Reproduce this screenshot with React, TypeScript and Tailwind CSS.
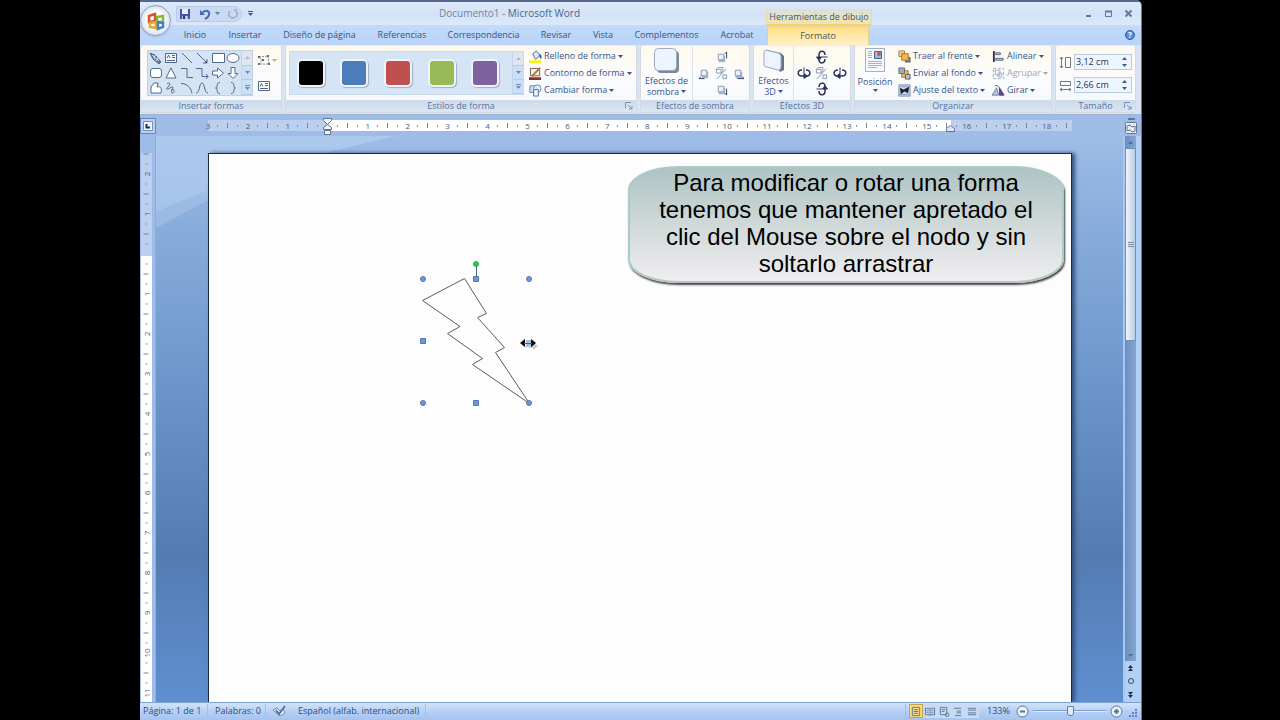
import type { ReactNode } from "react";
import { clsx } from "clsx";

const tabs = [
  "Inicio",
  "Insertar",
  "Diseño de página",
  "Referencias",
  "Correspondencia",
  "Revisar",
  "Vista",
  "Complementos",
  "Acrobat",
];

const swatches = [
  { name: "Negro", color: "bg-black" },
  { name: "Azul", color: "bg-[#4b7dbc]" },
  { name: "Rojo", color: "bg-[#c04f4f]" },
  { name: "Verde", color: "bg-[#98bb58]" },
  { name: "Morado", color: "bg-[#7e629f]" },
];

// one drawing per cell of the shape gallery, on a 14x14 grid
const shapes: { name: string; art: ReactNode }[] = [
  {
    name: "WordArt",
    art: (
      <>
        <path d="M1 2l5 2 6 7-2 2-6-5z" fill="#5d7891" />
        <path d="M3 4l7 6M6 4l-1 4M9 7l-2 3" stroke="#dce8f5" />
      </>
    ),
  },
  {
    name: "Cuadro de texto",
    art: (
      <>
        <path d="M1.500 2.500h11v9h-11z" fill="#f4f8fd" />
        <path d="M3 7l1.500-3L6 7M8 4.500h3M8 6.500h3M3 9.500h8" />
      </>
    ),
  },
  { name: "Línea", art: <path d="M2 2l10 10" /> },
  { name: "Flecha", art: <path d="M2 2l10 10M12 8v4H8M10 12l2-2" /> },
  { name: "Rectángulo", art: <path d="M1.500 2.500h12v9h-12z" fill="#fff" /> },
  { name: "Elipse", art: <ellipse cx="7" cy="7" rx="6" ry="4.500" fill="#fff" /> },
  { name: "Rectángulo redondeado", art: <rect x="1.500" y="2.500" width="11" height="9" rx="2.500" fill="#fff" /> },
  { name: "Triángulo", art: <path d="M7 2l5 10H2z" fill="#fff" /> },
  { name: "Conector angular", art: <path d="M1 2.500h6v9h6" /> },
  { name: "Flecha angular", art: <path d="M1 2.500h6v8h6M11 8l2 2.500-2 2.500" /> },
  { name: "Flecha derecha", art: <path d="M1.500 5h5V2l6 5-6 5V9h-5z" fill="#fff" /> },
  { name: "Flecha abajo", art: <path d="M5 1.500v6H2l5 5 5-5H9v-6z" fill="#fff" /> },
  { name: "Forma libre", art: <path d="M2 12V6l3-4h4L8 6c4-1 5 1 4 6z" fill="#fff" /> },
  { name: "A mano alzada", art: <path d="M3 3c3-3 4 1 1 3s-1 3 2 1 4-1 2 2 1 4 2 2-1-3-3-2" /> },
  { name: "Arco", art: <path d="M1 2.500c6 0 10 4 11 10" /> },
  { name: "Curva", art: <path d="M1 12c4 0 3-10 6-10s2 10 6 10" /> },
  { name: "Abrir llave", art: <path d="M9 1.500C4 1.500 8 7 4.500 7 8 7 4 12.500 9 12.500" /> },
  { name: "Cerrar llave", art: <path d="M5 1.500C10 1.500 6 7 9.500 7 6 7 10 12.500 5 12.500" /> },
];

// ruler marks, four per centimetre
const rulerMark = (i: number, zero: number) => {
  const n = i - zero;
  if (n === 0) return "";
  if (n % 4 === 0) return String(Math.abs(n / 4));
  return n % 2 === 0 ? "|" : "·";
};

function Mark({ value }: { value: string }) {
  if (value === "|") return <i className="h-[5px] w-px bg-[#7a8391]" />;
  if (value === "·") return <i className="h-[2px] w-px bg-[#8a929e]" />;
  return <span>{value}</span>;
}

function Caret({ className = "" }: { className?: string }) {
  return (
    <svg viewBox="0 0 5 3" className={clsx("h-[3px] w-[5px] shrink-0", className)} fill="currentColor">
      <path d="M0 0h5L2.500 3z" />
    </svg>
  );
}

function Launcher() {
  return (
    <button aria-label="Más opciones" className="absolute right-[3px] top-[2px]">
      <svg viewBox="0 0 8 8" className="size-2" fill="none" stroke="#7992b8">
        <path d="M.5 6V.5H6M3 3l4 4M7 4v3H4" />
      </svg>
    </button>
  );
}

function Group({ label, launcher, children }: { label: string; launcher?: boolean; children: ReactNode }) {
  return (
    <section className="flex min-w-0 flex-col overflow-hidden rounded-[3px] border border-[#d5dae2] border-t-[#f6ead0] bg-linear-to-b from-[#fff9ed] via-[#fbfcfe] to-[#f3f7fc]">
      <div className="flex min-h-0 flex-1">{children}</div>
      <h2 className="relative h-3 bg-linear-to-b from-[#cddaea] to-[#dce6f2] text-center leading-3 text-[#5473a5]">
        {label}
        {launcher && <Launcher />}
      </h2>
    </section>
  );
}

function GalleryScroll() {
  return (
    <div className="flex w-[11px] shrink-0 flex-col border-l border-[#c2d3ea] text-[#6b89b5]">
      {["Subir", "Bajar", "Más"].map((name, i) => (
        <button
          key={name}
          aria-label={name}
          className={clsx(
            "flex flex-1 flex-col items-center justify-center gap-px border-b border-[#b5cae6]",
            i === 0 ? "bg-[#dfe6ee] text-[#abb9ca]" : "bg-[#cbdff6]"
          )}
        >
          {i === 2 && <span className="h-px w-[5px] bg-current" />}
          <Caret className={i === 0 ? "rotate-180" : ""} />
        </button>
      ))}
    </div>
  );
}

function Command({ icon, label, disabled }: { icon: ReactNode; label: string; disabled?: boolean }) {
  return (
    <button
      disabled={disabled}
      className={clsx("flex h-[17px] items-center gap-[2px] whitespace-nowrap", disabled ? "text-[#a3a7b0]" : "text-[#36548b]")}
    >
      <svg viewBox="0 0 14 14" className="size-[13px] shrink-0" fill="none">
        {icon}
      </svg>
      {label}
      <Caret />
    </button>
  );
}

function SizeField({ id, label, value, icon }: { id: string; label: string; value: string; icon: ReactNode }) {
  return (
    <div className="flex items-center gap-[2px]">
      <label htmlFor={id} aria-label={label}>
        <svg viewBox="0 0 13 13" className="size-[13px]" fill="none" stroke="#6b7a91">
          {icon}
        </svg>
      </label>
      <div className="flex h-4 min-w-0 flex-1 items-center border border-[#b7cbe5] bg-[#eef5fd]">
        <input id={id} defaultValue={value} className="w-full min-w-0 bg-transparent pl-px text-[#26355a] outline-none" />
        <div className="flex flex-col gap-[4px] px-1 text-[#3c5a8e]">
          <button aria-label={"Aumentar " + label}>
            <Caret className="block rotate-180" />
          </button>
          <button aria-label={"Reducir " + label}>
            <Caret className="block" />
          </button>
        </div>
      </div>
    </div>
  );
}

function TitleBar() {
  return (
    <header className="flex h-[25px] items-center border-t-2 border-[#54688f] bg-linear-to-b from-[#dfeafa] via-[#d3e3f7] to-[#dce9fa] pl-9">
      <div className="flex h-4 w-[66px] items-center gap-2 rounded-r-full border border-[#bccde6] bg-[#c9dbf3] pl-[2px]">
        <button aria-label="Guardar">
          <svg viewBox="0 0 12 12" className="size-3">
            <path d="M1 1h10v10H1z" fill="#4552ae" />
            <path d="M3 1h6v5H3z" fill="#e9effc" />
            <path d="M3 8h6v3H3z" fill="#b9c4e3" />
            <path d="M4 8h2v3H4z" fill="#273575" />
          </svg>
        </button>
        <button aria-label="Deshacer" className="flex items-center gap-1 text-[#637ba4]">
          <svg viewBox="0 0 12 12" className="size-3" fill="none" stroke="#4768b8" strokeWidth="2">
            <path d="M3 5c4-4 8-2 7 2-.5 2-2 3-4 4" />
            <path d="M1 2v5h5z" fill="#4768b8" stroke="none" />
          </svg>
          <Caret />
        </button>
        <button aria-label="Rehacer" className="-ml-px">
          <svg viewBox="0 0 12 12" className="size-3" fill="none" stroke="#a5b5ca" strokeWidth="2">
            <path d="M3 3c-3 4 0 7 3 7s6-4 3-7" />
            <path d="M6 1h4v4z" fill="#a5b5ca" stroke="none" />
          </svg>
        </button>
      </div>
      <button aria-label="Personalizar" className="ml-[6px] flex flex-col items-center gap-px text-[#42557a]">
        <span className="h-px w-[5px] bg-current" />
        <Caret />
      </button>
      <h1 className="flex-1 text-center text-[10px] text-[#49658f]">
        <span className="text-[#75849c]">Documento1 - </span>Microsoft Word
      </h1>
      <div className="flex h-4 w-[106px] items-center justify-center self-end border-x border-b border-[#e6d9ae] border-b-[#f2ce6c] bg-linear-to-b from-[#d9e1df] to-[#f1e4ae] whitespace-nowrap text-[#3b5377]">
        Herramientas de dibujo
      </div>
      <div className="flex w-[269px] items-center justify-end gap-[11px] pr-2 text-[#66799b]">
        <button aria-label="Minimizar">
          <svg viewBox="0 0 9 9" className="size-[9px]" fill="currentColor">
            <path d="M2 6h5v2H2z" />
          </svg>
        </button>
        <button aria-label="Maximizar">
          <svg viewBox="0 0 9 9" className="size-[9px]" fill="none" stroke="currentColor">
            <path d="M1.500 2.500h6v5h-6z" />
            <path d="M1 2.500h7" strokeWidth="2" />
          </svg>
        </button>
        <button aria-label="Cerrar">
          <svg viewBox="0 0 9 9" className="size-[9px]" fill="none" stroke="currentColor" strokeWidth="2">
            <path d="M1.500 1.500l6 6M7.500 1.500l-6 6" />
          </svg>
        </button>
      </div>
    </header>
  );
}

function OfficeButton() {
  return (
    <button
      aria-label="Botón de Office"
      className="absolute left-0 top-[5px] z-10 flex size-[31px] items-center justify-center rounded-full border border-[#8c9fbd] bg-radial from-white from-40% to-[#b9c9df] shadow-sm"
    >
      <svg viewBox="0 0 20 20" className="size-5" fill="none" strokeWidth="2.500">
        <path d="M3 5l6-2v7l-6 1z" stroke="#d8512b" />
        <path d="M11 6l6-1v6h-6z" stroke="#82b83d" />
        <path d="M4 12l6-1v6l-6-1z" stroke="#e8a729" />
        <path d="M12 11l5 1v4l-5 2z" stroke="#3c82c8" />
      </svg>
    </button>
  );
}

function TabBar() {
  return (
    <nav className="flex h-5 items-end bg-linear-to-b from-[#c3daf8] to-[#b8d4fa] pl-8 text-[#355488]">
      <div className="grid h-full grid-cols-[46px_54px_95px_70px_93px_52px_42px_85px_56px]">
        {tabs.map((tab) => (
          <a key={tab} href="#" className="flex items-center justify-center whitespace-nowrap">
            {tab}
          </a>
        ))}
      </div>
      <a
        href="#"
        className="ml-[2px] flex h-[19px] w-[102px] items-center justify-center rounded-t-[3px] border-x border-t border-[#e8cf91] bg-linear-to-b from-[#ffdf83] to-[#fff0c8] text-[#4c5266]"
      >
        Formato
      </a>
      <button
        aria-label="Ayuda"
        className="mb-[5px] ml-auto mr-[6px] flex size-[10px] items-center justify-center rounded-full border border-[#2c58aa] bg-[#5d8bd7] text-[8px] leading-none font-bold text-white"
      >
        ?
      </button>
    </nav>
  );
}

function ShadowNudge({ name, arrow, place }: { name: string; arrow: string; place: string }) {
  return (
    <button aria-label={name} className={place}>
      <svg viewBox="0 0 14 14" className="size-[13px]" fill="none" stroke="#8598ad">
        <path d="M4 5h7v7H4z" fill="#a9b7c6" stroke="none" />
        <path d="M3.500 3.500h6v6h-6z" fill="#e9f1fa" />
        <path d={arrow} stroke="#26375c" />
      </svg>
    </button>
  );
}

function Tilt({ name, turn, place }: { name: string; turn: string; place: string }) {
  return (
    <button aria-label={name} className={place}>
      <svg viewBox="0 0 14 14" className={clsx("size-[14px]", turn)} fill="none" stroke="#29325c" strokeWidth="1.500">
        <path d="M5 4C0 4 0 10 5 10h2M9 4c5 0 5 6 1 6" />
        <path d="M7 1.500v11" strokeWidth="1" />
        <path d="M7 7v6l4-3z" fill="#29325c" stroke="none" />
      </svg>
    </button>
  );
}

function OnOff({ name }: { name: string }) {
  return (
    <button aria-label={name} className="col-start-2 row-start-2">
      <svg viewBox="0 0 14 14" className="size-[13px]" fill="none" stroke="#8296b0">
        <path d="M1.500 2.500h5v4h-5zM1.500 2.500l2-2h5v4l-2 2M12 2L2 13M8.500 8.500h4v4h-4z" />
      </svg>
    </button>
  );
}

function Ribbon() {
  return (
    <div className="grid h-[70px] grid-cols-[142fr_352fr_110fr_98fr_198fr_81fr] gap-[3px] border-b border-[#9db5d5] bg-[#d8e4f2] pb-px pr-[5px] text-[#36548b]">
      <Group label="Insertar formas">
        <div className="my-1 ml-[6px] flex w-[106px] shrink-0 border border-[#bfd1e8] bg-[#d5e4f5]">
          <div className="grid flex-1 grid-cols-6 grid-rows-3 place-items-center">
            {shapes.map((s) => (
              <button key={s.name} aria-label={s.name}>
                <svg viewBox="0 0 14 14" className="block size-[14px]" fill="none" stroke="#53688a">
                  {s.art}
                </svg>
              </button>
            ))}
          </div>
          <GalleryScroll />
        </div>
        <div className="flex flex-1 flex-col items-start justify-between py-2 pl-1">
          <button aria-label="Modificar forma" className="flex items-center gap-px text-[#a8aeb8]">
            <svg viewBox="0 0 14 12" className="h-3 w-[14px]" fill="#5f6977" stroke="#8790a0">
              <path d="M2 3l9-1 1 8H2l3-4z" fill="none" strokeDasharray="2 1" />
              <path d="M1 2h2v2H1zM10 1h2v2h-2zM11 9h2v2h-2zM1 9h2v2H1zM5 5h2v2H5z" stroke="none" />
            </svg>
            <Caret />
          </button>
          <button aria-label="Dibujar cuadro de texto">
            <svg viewBox="0 0 14 12" className="block h-3 w-[14px]" fill="none" stroke="#4f678d">
              <path d="M1.500 1.500h11v9h-11z" fill="#fff" />
              <path d="M3 6.500l1.500-3L6 6.500M8 3.500h3M8 5.500h3M3 8.500h8" />
            </svg>
          </button>
        </div>
      </Group>

      <Group label="Estilos de forma" launcher>
        <div className="my-[5px] ml-[3px] flex flex-1 border border-[#c9daee] bg-[#d5e5f6]">
          <div className="grid flex-1 grid-cols-5 place-items-center pr-1">
            {swatches.map((s) => (
              <button
                key={s.name}
                aria-label={s.name}
                className={clsx("size-7 -translate-x-px rounded-[5px] border-2 border-[#eef4fa] shadow-[1px_1px_1px_#a0aec2]", s.color)}
              />
            ))}
          </div>
          <GalleryScroll />
        </div>
        <div className="flex w-[112px] shrink-0 flex-col justify-center pl-[5px]">
          <Command
            label="Relleno de forma"
            icon={
              <>
                <path d="M4 4l4-3 4 5-5 4z" fill="#dce8f5" stroke="#50698f" />
                <path d="M11 5c2 1 2 3 1 4" stroke="#3668b2" strokeWidth="2" />
                <path d="M0 11h13v3H0z" fill="#f7f219" />
              </>
            }
          />
          <Command
            label="Contorno de forma"
            icon={
              <>
                <path d="M1.500 1.500h10v8h-10z" fill="#eee" stroke="#6c5e58" />
                <path d="M12 1L5 8l-2 2" stroke="#ac762b" strokeWidth="2" />
                <path d="M0 11h13v3H0z" fill="#8d2f31" />
              </>
            }
          />
          <Command
            label="Cambiar forma"
            icon={
              <>
                <path d="M1 2h7v7H1z" fill="#cddff5" stroke="#6281af" />
                <circle cx="9" cy="5" r="4" fill="#e2edf9" stroke="#6281af" />
                <path d="M5 6h5v7H5z" fill="#edf4fc" stroke="#3c6ca8" />
              </>
            }
          />
        </div>
      </Group>

      <Group label="Efectos de sombra">
        <button className="flex w-[52px] shrink-0 flex-col items-center border-r border-[#dbe2ec] pt-px leading-[11px]">
          <svg viewBox="0 0 28 28" className="size-7 shrink-0">
            <rect x="4" y="4" width="22" height="22" rx="4" fill="#7f8893" />
            <rect x="1.500" y="1.500" width="22" height="22" rx="4" fill="#edf4fd" stroke="#9aabc3" />
          </svg>
          <span>Efectos de</span>
          <span className="flex items-center gap-[2px]">
            sombra <Caret />
          </span>
        </button>
        <div className="m-auto grid grid-cols-3 gap-x-1 gap-y-[3px]">
          <ShadowNudge name="Sombra hacia arriba" place="col-start-2 row-start-1" arrow="M12.500 8V1M10.500 3l2-2" />
          <ShadowNudge name="Sombra a la izquierda" place="col-start-1 row-start-2" arrow="M7 12.500H1M3 10.500l-2 2" />
          <OnOff name="Activar o desactivar sombra" />
          <ShadowNudge name="Sombra a la derecha" place="col-start-3 row-start-2" arrow="M6 12.500h7M11 10.500l2 2" />
          <ShadowNudge name="Sombra hacia abajo" place="col-start-2 row-start-3" arrow="M12.500 6v7M10.500 11l2 2" />
        </div>
      </Group>

      <Group label="Efectos 3D">
        <button className="flex w-10 shrink-0 flex-col items-center border-r border-[#dbe2ec] pt-px leading-[11px]">
          <svg viewBox="0 0 28 28" className="size-7 shrink-0">
            <path d="M7 3l14 3 3 3v14l-4 2z" fill="#657383" />
            <path d="M6 3q-2 0-2 3v12q0 2 3 2l11 3q3 0 3-3V9q0-2-3-3z" fill="#edf4fd" stroke="#9aabc3" />
          </svg>
          <span>Efectos</span>
          <span className="flex items-center gap-[2px]">
            3D <Caret />
          </span>
        </button>
        <div className="m-auto grid grid-cols-3 gap-x-1 gap-y-[2px]">
          <Tilt name="Inclinar hacia arriba" place="col-start-2 row-start-1" turn="rotate-90" />
          <Tilt name="Inclinar a la izquierda" place="col-start-1 row-start-2" turn="rotate-0" />
          <OnOff name="Activar o desactivar 3D" />
          <Tilt name="Inclinar a la derecha" place="col-start-3 row-start-2" turn="-scale-x-100" />
          <Tilt name="Inclinar hacia abajo" place="col-start-2 row-start-3" turn="-rotate-90" />
        </div>
      </Group>

      <Group label="Organizar">
        <button className="flex w-10 shrink-0 flex-col items-center pt-[2px]">
          <svg viewBox="0 0 20 24" className="h-6 w-5 shrink-0" fill="none" stroke="#a3b1c7">
            <path d="M.5.5h19v23H.5z" fill="#f5f9fe" />
            <path d="M3 3.500h4M3 5.500h4M3 7.500h4M3 9.500h4M3 13.500h14M3 15.500h14M3 17.500h14M3 19.500h9" />
            <path d="M9.500 3.500h7v7h-7z" fill="#9db9de" stroke="#44618f" />
            <circle cx="14" cy="6" r="2" fill="#d4543d" stroke="none" />
          </svg>
          <span className="mt-[3px]">Posición</span>
          <Caret />
        </button>
        <div className="ml-[3px] flex w-[94px] shrink-0 flex-col justify-center">
          <Command
            label="Traer al frente"
            icon={
              <>
                <path d="M1 1h6v6H1z" fill="#f0d28c" stroke="#9f834c" />
                <path d="M8 8h5v5H8z" fill="#8993a2" stroke="#4b5263" />
                <path d="M4 4h7v7H4z" fill="#f0b845" stroke="#a9712b" />
              </>
            }
          />
          <Command
            label="Enviar al fondo"
            icon={
              <>
                <path d="M4 4h7v7H4z" fill="#eebe56" stroke="#a9712b" />
                <path d="M1 1h6v6H1z" fill="#a3acba" stroke="#5d6678" />
                <path d="M8 8h5v5H8z" fill="#bbc4d0" stroke="#4b5263" />
              </>
            }
          />
          <Command
            label="Ajuste del texto"
            icon={
              <>
                <path d="M1 1h12v12H1z" fill="#d8e5f7" stroke="#7083a1" />
                <path d="M2 3h10M2 11h10" stroke="#7790b8" />
                <path d="M2 4l4 2 6-3-1 7-4-2-4 3z" fill="#20242c" />
              </>
            }
          />
        </div>
        <div className="flex flex-col justify-center">
          <Command
            label="Alinear"
            icon={
              <>
                <path d="M2 1v12" stroke="#303440" strokeWidth="2" />
                <path d="M4 3h5v2H4zM4 9h8v2H4z" fill="#c8d1df" stroke="#53617a" />
              </>
            }
          />
          <Command
            disabled
            label="Agrupar"
            icon={
              <>
                <path d="M1.500 1.500h11v11h-11z" stroke="#99a4b5" strokeDasharray="3 2" />
                <path d="M3.500 3.500h5v5h-5zM6.500 6.500h4v4h-4z" stroke="#9caabf" />
              </>
            }
          />
          <Command
            label="Girar"
            icon={
              <>
                <path d="M0 12h7L5 4z" fill="#b7c5dc" stroke="#7482a0" />
                <path d="M8 4l5 8H8z" fill="#69458e" stroke="#503679" />
                <path d="M3 2c2-1 4 0 5 2" stroke="#42618f" />
              </>
            }
          />
        </div>
      </Group>

      <Group label="Tamaño" launcher>
        <div className="flex min-w-0 flex-1 flex-col gap-[7px] px-[3px] pt-2">
          <SizeField
            id="alto"
            label="Alto de forma"
            value="3,12 cm"
            icon={<path d="M2.500 1v11M1 3l1.500-2L4 3M1 10l1.500 2L4 10M6.500 1.500h5v10h-5z" />}
          />
          <SizeField
            id="ancho"
            label="Ancho de forma"
            value="2,66 cm"
            icon={<path d="M1.500 2.500h10v4h-10zM1 10.500h11M3 9l-2 1.500L3 12M10 9l2 1.500-2 1.500" />}
          />
        </div>
      </Group>
    </div>
  );
}

function HorizontalRuler() {
  return (
    <div className="flex h-[21px] items-center bg-[#9fbce8] pr-1 text-[8px] leading-none text-[#4c5a70]">
      <button aria-label="Tabulación izquierda" className="flex size-4 items-center justify-center border border-[#6586bd] bg-[#b9d0f0]">
        <svg viewBox="0 0 10 10" className="size-[10px]" fill="#eef5fd" stroke="#7491bf">
          <path d="M.5.5h9v9h-9z" />
          <path d="M3.500 3v3.500H7" stroke="#1c2c4c" strokeWidth="2" />
        </svg>
      </button>
      <div className="relative ml-[52px] mr-[53px] min-w-0 flex-1">
        <div className="flex h-[11px] items-center bg-[linear-gradient(90deg,#bbd0ee_120px,#fff_120px,#fff_calc(100%-121px),#bbd0ee_calc(100%-121px))]">
          <div className="-ml-[5px] flex flex-1">
            {Array.from({ length: 87 }, (_, i) => (
              <div key={i} className="flex w-0 flex-1 items-center justify-center">
                <Mark value={rulerMark(i, 12)} />
              </div>
            ))}
          </div>
        </div>
        {/* indent handles sit over the ruler */}
        <svg viewBox="0 0 9 17" className="absolute -top-[2px] left-[115px] h-[17px] w-[9px]" fill="#eef5fd" stroke="#61758f">
          <path d="M.5.5h8v2l-4 4-4-4zM.5 11.500v-2l4-3 4 3v2zM1.500 12.500h6v4h-6z" />
        </svg>
        <svg viewBox="0 0 9 7" className="absolute right-[117px] top-[5px] h-[7px] w-[9px]" fill="#dfe9f6" stroke="#61758f">
          <path d="M.5 6.500v-3l4-3 4 3v3z" />
        </svg>
      </div>
      <button aria-label="Regla" className="flex flex-col items-center gap-[2px]">
        <span className="h-[2px] w-[7px] bg-[#5c77a5]" />
        <svg viewBox="0 0 12 12" className="size-3" fill="#e6edf7" stroke="#68748a">
          <rect x=".5" y=".5" width="11" height="11" rx="1" />
          <path d="M2 4l3-1 2 2 3-1v5l-3 1-2-2-3 1z" />
        </svg>
      </button>
    </div>
  );
}

function VerticalRuler() {
  return (
    <div className="flex w-4 shrink-0 flex-col border-r border-[#8eacd9] bg-[#9fbce8] pl-px pr-[3px] pt-[17px] text-[8px] leading-none text-[#4c5a70]">
      <div className="flex min-h-0 flex-1 flex-col bg-[linear-gradient(#bbd0ee_103px,#fff_103px)] pb-1">
        <div className="-mt-1 flex min-h-0 flex-1 flex-col">
          {Array.from({ length: 55 }, (_, i) => (
            <div key={i} className="flex h-0 flex-1 -rotate-90 items-center justify-center">
              <Mark value={rulerMark(i, 10)} />
            </div>
          ))}
        </div>
      </div>
    </div>
  );
}

// lightning bolt with its eight handles, rotation handle and resize pointer
function SelectedShape() {
  return (
    <svg viewBox="0 0 130 152" className="absolute left-[208px] top-[102px] h-[152px] w-[130px]" fill="none">
      <path
        d="M47.500 22.500L5.500 44.500 43 70.500 30.500 77.500 65.500 102.500 55.500 108.500 112.500 147.500 78.500 96.500 87.500 91.500 60.500 61.500 69.500 57.500z"
        stroke="#5c5c5c"
      />
      <path d="M59.500 8v14" stroke="#48658f" />
      <circle cx="59" cy="8" r="2.500" fill="#19d251" stroke="#22b04e" />
      <g fill="#6d96d3" stroke="#5578b0">
        <circle cx="6" cy="23" r="2.500" />
        <circle cx="112" cy="23" r="2.500" />
        <circle cx="6" cy="147" r="2.500" />
        <circle cx="112" cy="147" r="2.500" />
        <path d="M56.500 20.500h5v5h-5zM3.500 82.500h5v5h-5zM56.500 144.500h5v5h-5z" />
      </g>
      <path d="M107 91l4-2h6v-2l4 3-5 4v-2z" fill="#ccc" />
      <path d="M109 84h6v6h-6z" fill="#a3bfe6" />
      <path d="M103 87l5-4v8zM119 87l-5-4v8z" fill="#000" />
      <path d="M107 87.500h8" stroke="#4e5f7a" />
    </svg>
  );
}

function DocumentArea() {
  return (
    <div className="relative flex min-w-0 flex-1 overflow-hidden bg-[linear-gradient(#9ebce7,#86abda_18%,#6b95ca_45%,#547cb1_74%,#5f8fd1)] pl-[52px] pr-[51px] pt-[17px]">
      <svg viewBox="0 0 240 100" className="absolute left-0 top-0 h-[100px] w-60">
        <path d="M0 0h240C160 18 80 40 0 76z" fill="#b7d1f1" opacity=".6" />
        <path d="M0 76L52 54v10L0 92z" fill="#b7d1f1" opacity=".35" />
      </svg>
      <main className="relative flex-1 border border-b-0 border-[#1d2c42] bg-[#fdfdfe] shadow-[3px_0_4px_#34527f]">
        <SelectedShape />
        <p className="absolute right-[7px] top-3 w-[436px] rounded-[50px/24px] border-2 border-[#abcbc8] border-b-[#b5c4c4] bg-linear-to-b from-[#afc3c3] via-[#d0d9d9] to-[#efedf0] px-4 pb-1 pt-px text-center font-['Liberation_Sans',Arial,sans-serif] text-2xl leading-[27px] text-black shadow-[1px_2px_2px_#444]">
          Para modificar o rotar una forma
          <br />
          tenemos que mantener apretado el
          <br />
          clic del Mouse sobre el nodo y sin
          <br />
          soltarlo arrastrar
        </p>
      </main>
    </div>
  );
}

function ScrollBar() {
  return (
    <div className="flex w-[18px] shrink-0 flex-col items-center border-l-2 border-[#a9c7f1] bg-[#b2cff4] pr-[5px] text-[#4e6c9f]">
      <div className="flex w-full flex-1 flex-col items-center bg-linear-to-r from-[#6c8fbf] to-[#86a5d0]">
        <button aria-label="Desplazar arriba" className="flex h-3 items-center">
          <Caret className="rotate-180" />
        </button>
        <div className="flex h-[193px] w-full flex-col items-center justify-center gap-px border border-[#7690b5] bg-linear-to-r from-[#f0f5fb] to-[#b9cde3]">
          <span className="h-px w-[6px] bg-[#7c91ad]" />
          <span className="h-px w-[6px] bg-[#7c91ad]" />
          <span className="h-px w-[6px] bg-[#7c91ad]" />
        </div>
        <button aria-label="Desplazar abajo" className="mt-auto flex h-3 items-center">
          <Caret />
        </button>
      </div>
      <div className="flex h-[41px] flex-col items-center justify-around text-[#1b2c4f]">
        <button aria-label="Página anterior">
          <Caret className="block rotate-180" />
          <Caret className="block rotate-180" />
        </button>
        <button aria-label="Seleccionar objeto" className="size-[6px] rounded-full border border-[#35486e] bg-[#bed0e8]" />
        <button aria-label="Página siguiente">
          <Caret className="block" />
          <Caret className="block" />
        </button>
      </div>
    </div>
  );
}

const views = [
  { name: "Diseño de impresión", d: "M2.500 1.500h8v9h-8zM4 4h5M4 6h5M4 8h5" },
  { name: "Lectura", d: "M1.500 2.500h4l1 1 1-1h4v7h-4l-1 1-1-1h-4zM6.500 3v7M3 5h2M8 5h2M3 7h2M8 7h2" },
  { name: "Diseño web", d: "M2.500 1.500h7v8h-7zM4 4h4M4 6h3M8 9.500a2 2 0 1 0 4 0 2 2 0 1 0-4 0" },
  { name: "Esquema", d: "M2 2.500h8M5 5.500h5M5 7.500h5M3 10.500h7" },
  { name: "Borrador", d: "M2 2.500h9M2 4.500h9M2 7.500h9M2 9.500h9" },
];

function StatusBar() {
  return (
    <footer className="flex h-[18px] items-center border-t border-[#7da2d8] bg-linear-to-b from-[#d2e3fa] via-[#b5d0f5] to-[#a4c3ef] pb-px text-[#2e4c80]">
      <span className="w-[68px] border-r border-[#a5bfe5] pl-[3px] whitespace-nowrap">Página: 1 de 1</span>
      <span className="w-[58px] border-r border-[#a5bfe5] pl-[7px] whitespace-nowrap">Palabras: 0</span>
      <button aria-label="Revisión" className="mx-[6px]">
        <svg viewBox="0 0 14 12" className="h-3 w-[14px]" fill="#f2f6fc" stroke="#7286a7">
          <path d="M1 5l4-2 3 3 3-2 2 4-5 3z" />
          <path d="M4 5l3 4 6-8" fill="none" stroke="#5474a6" strokeWidth="2" />
        </svg>
      </button>
      <span className="ml-[6px] border-r border-[#a5bfe5] pr-[6px]">Español (alfab. internacional)</span>
      <div className="ml-auto flex border-l border-[#9dbae3] pl-[3px]">
        {views.map((v, i) => (
          <button
            key={v.name}
            aria-label={v.name}
            className={clsx("flex h-[14px] w-[14px] items-center justify-center", i === 0 ? "border border-[#c7a14c] bg-[#fbdc85]" : "bg-[#c8dbf2]")}
          >
            <svg viewBox="0 0 13 12" className="h-[11px] w-3" fill="none" stroke="#5a7396">
              <path d={v.d} />
            </svg>
          </button>
        ))}
      </div>
      <span className="ml-2 w-[29px]">133%</span>
      <button aria-label="Alejar">
        <svg viewBox="0 0 13 13" className="size-[13px]" fill="#e9f2fd" stroke="#5e7294">
          <circle cx="6.500" cy="6.500" r="5.500" />
          <path d="M4 6.500h5" strokeWidth="2" />
        </svg>
      </button>
      <input
        type="range"
        aria-label="Zoom"
        min={0}
        max={100}
        defaultValue={52}
        className="mx-1 h-3 w-[73px] appearance-none bg-[linear-gradient(transparent_5px,#7e9dcb_5px,#7e9dcb_6px,#dceafb_6px,#dceafb_7px,transparent_7px)] [&::-webkit-slider-thumb]:h-[10px] [&::-webkit-slider-thumb]:w-[7px] [&::-webkit-slider-thumb]:appearance-none [&::-webkit-slider-thumb]:rounded-b-[3px] [&::-webkit-slider-thumb]:border [&::-webkit-slider-thumb]:border-[#68809f] [&::-webkit-slider-thumb]:bg-[#e0ebf8]"
      />
      <button aria-label="Acercar">
        <svg viewBox="0 0 13 13" className="size-[13px]" fill="#e9f2fd" stroke="#5e7294">
          <circle cx="6.500" cy="6.500" r="5.500" />
          <path d="M4 6.500h5M6.500 4v5" strokeWidth="2" />
        </svg>
      </button>
      <svg viewBox="0 0 9 9" className="ml-[6px] mr-[3px] mt-1 size-[9px]" fill="#6484b9">
        <path d="M6 0h2v2H6zM3 3h2v2H3zM6 3h2v2H6zM0 6h2v2H0zM3 6h2v2H3zM6 6h2v2H6z" />
      </svg>
    </footer>
  );
}

export default function App() {
  return (
    <div className="h-screen bg-black pl-[140px] pr-[138px] font-['Open_Sans','Noto_Sans',sans-serif] text-[9px]">
      <div className="relative flex h-full flex-col overflow-hidden rounded-tr-md border-r border-[#5f7da9] bg-[#b2cff4]">
        <OfficeButton />
        <TitleBar />
        <TabBar />
        <Ribbon />
        <HorizontalRuler />
        <div className="flex min-h-0 flex-1">
          <VerticalRuler />
          <DocumentArea />
          <ScrollBar />
        </div>
        <StatusBar />
      </div>
    </div>
  );
}
